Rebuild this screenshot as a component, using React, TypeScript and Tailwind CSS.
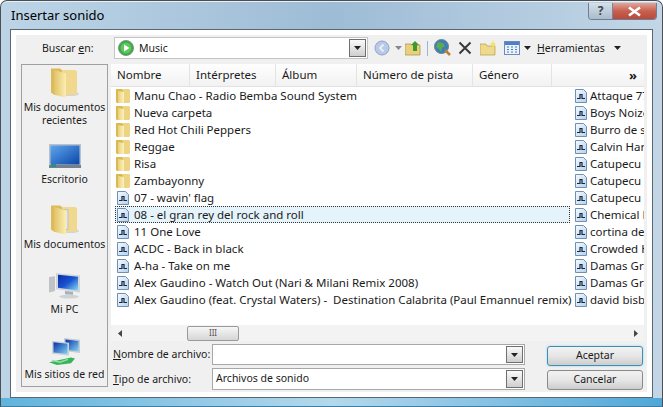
import React from "react";

const Folder = ({ className = "" }: { className?: string }) => (
  <svg width="16" height="16" viewBox="0 0 16 16" className={"shrink-0 " + className}>
    <defs>
      <linearGradient id="fa" x1="0" x2="1" y1="0" y2="0">
        <stop offset="0" stopColor="#e8cf7c" />
        <stop offset="1" stopColor="#fdf2bf" />
      </linearGradient>
    </defs>
    <path d="M1 1h6l1 1v13H2l-1-1z" fill="#d9b950" />
    <path d="M8 1h6l1 1v12l-1 1H8z" fill="#edd483" />
    <path d="M3 3l6 1v11H3z" fill="url(#fa)" />
  </svg>
);

const Audio = ({ className = "" }: { className?: string }) => (
  <svg width="16" height="16" viewBox="0 0 16 16" className={"shrink-0 " + className}>
    <defs>
      <linearGradient id="au" x1="0" x2="1" y1="0" y2="1">
        <stop offset="0" stopColor="#f6fbff" />
        <stop offset="1" stopColor="#b4d0ec" />
      </linearGradient>
    </defs>
    <path d="M2.500 1.500h8l3 3v10h-11z" fill="url(#au)" stroke="#6f8fb5" />
    <path d="M4 10.500h3v-4h2v4h3" fill="none" stroke="#12263f" strokeWidth="1.200" />
  </svg>
);

const Caret = ({ className = "" }: { className?: string }) => (
  <svg width="7" height="4" viewBox="0 0 7 4" className={"shrink-0 " + className}>
    <path d="M0 0h7L3.500 4z" fill="#222" />
  </svg>
);

const ComboArrow = () => (
  <div className="w-[17px] self-stretch m-px border border-[#6f6f6f] bg-gradient-to-b from-[#fafafa] to-[#cfcfcf] flex items-center justify-center">
    <Caret />
  </div>
);

const BigFolder = ({ docs = false }: { docs?: boolean }) => (
  <svg width="32" height="32" viewBox="0 0 32 44" preserveAspectRatio="none">
    <defs>
      <linearGradient id="bf" x1="0" x2="1" y1="0" y2="0">
        <stop offset="0" stopColor="#e2c268" />
        <stop offset="1" stopColor="#fbeeb0" />
      </linearGradient>
    </defs>
    <ellipse cx="22" cy="37" rx="9" ry="3" fill="#d4d4d4" />
    <path d="M3 2h9l2 2v34H6l-3-3z" fill="#dcbc58" />
    <path d="M14 4h13l2 2v30l-2 2H14z" fill="#f0d98e" />
    {docs && <path d="M12 8h8v27h-8z" fill="#e6e6e6" stroke="#bbb" />}
    <path d="M6 4l12 5v33L6 38z" fill="url(#bf)" />
  </svg>
);

const Desktop = () => (
  <svg width="32" height="24" viewBox="0 0 32 24">
    <defs>
      <linearGradient id="dk" x1="0" x2="1" y1="0" y2="1">
        <stop offset="0" stopColor="#5ea6ee" />
        <stop offset="1" stopColor="#0c46a8" />
      </linearGradient>
    </defs>
    <rect x="0" y="0" width="32" height="24" fill="#b8c2cc" />
    <rect x="1.500" y="1.500" width="29" height="19" fill="url(#dk)" />
    <rect x="0" y="21" width="32" height="3" fill="#76808a" />
    <rect x="2" y="20" width="5" height="3" fill="#2b8c8c" />
  </svg>
);

const Pc = () => (
  <svg width="32" height="26" viewBox="0 0 32 32" preserveAspectRatio="none">
    <defs>
      <linearGradient id="pc" x1="0" x2="1" y1="0" y2="1">
        <stop offset="0" stopColor="#0a2ea8" />
        <stop offset="0.500" stopColor="#1a52d0" />
        <stop offset="1" stopColor="#86dcf4" />
      </linearGradient>
    </defs>
    <path d="M0 5l6-1v18l-6 2z" fill="#bfc3c8" />
    <path d="M7 0l24 3v21L7 20z" fill="#cfd5da" />
    <path d="M9 2l20 2.500v17L9 18z" fill="url(#pc)" />
    <path d="M16 22l8 1v4l-8-1z" fill="#aab0b6" />
    <ellipse cx="20" cy="29" rx="10" ry="2.500" fill="#d0d3d6" />
  </svg>
);

const Net = () => (
  <svg width="32" height="28" viewBox="0 0 32 30" preserveAspectRatio="none">
    <defs>
      <linearGradient id="nt" x1="0" x2="1" y1="0" y2="1">
        <stop offset="0" stopColor="#0a2ea8" />
        <stop offset="1" stopColor="#7fd4f2" />
      </linearGradient>
    </defs>
    <path d="M15 0l16 2v14l-16-2z" fill="#c4ccd4" />
    <path d="M16.500 1.500l13 1.700v11l-13-1.700z" fill="url(#nt)" />
    <path d="M3 3l17 2v14L3 17z" fill="#ccd2d8" />
    <path d="M4.500 4.500l14 1.700v11l-14-1.700z" fill="url(#nt)" />
    <path d="M0 26l22-5 4 1-4 5-14 2z" fill="#35b45a" />
    <path d="M3 24l8 2 8-3" fill="none" stroke="#9adf9f" strokeWidth="1.500" />
  </svg>
);

const Place = ({
  icon,
  label,
  className,
  gap,
}: {
  icon: React.ReactNode;
  label: React.ReactNode;
  className: string;
  gap: string;
}) => (
  <div className={"flex flex-col items-center text-center leading-[13px] whitespace-nowrap " + className}>
    {icon}
    <span className={gap}>{label}</span>
  </div>
);

const left: [string, boolean][] = [
  ["Manu Chao - Radio Bemba Sound System", true],
  ["Nueva carpeta", true],
  ["Red Hot Chili Peppers", true],
  ["Reggae", true],
  ["Risa", true],
  ["Zambayonny", true],
  ["07 - wavin' flag", false],
  ["08 - el gran rey del rock and roll", false],
  ["11 One Love", false],
  ["ACDC - Back in black", false],
  ["A-ha - Take on me", false],
  ["Alex Gaudino - Watch Out (Nari & Milani Remix 2008)", false],
  ["Alex Gaudino (feat. Crystal Waters) -  Destination Calabrita (Paul Emannuel remix)", false],
];

const right = [
  "Attaque 77",
  "Boys Noize",
  "Burro de sl",
  "Calvin Harris",
  "Catupecu",
  "Catupecu",
  "Catupecu",
  "Chemical Brothers",
  "cortina de",
  "Crowded House",
  "Damas Gra",
  "Damas Gra",
  "david bisb",
];

const cols: [string, string][] = [
  ["Nombre", "w-[79px]"],
  ["Intérpretes", "w-[86px]"],
  ["Álbum", "w-[81px]"],
  ["Número de pista", "w-[116px]"],
  ["Género", "w-[79px]"],
];

export default function App() {
  return (
    <div
      className="w-[663px] h-[407px] bg-white overflow-hidden text-[#1a1a1a] text-[10.5px]"
      style={{ fontFamily: '"Noto Sans", "Open Sans", sans-serif' }}
    >
      <div className="w-full h-full flex flex-col rounded-t-[7px] border border-[#4a4f55] border-b-[#3f7ea3] bg-gradient-to-r from-[#bcd4e6] via-[#9ebcd6] to-[#c2d6e6] shadow-[inset_0_1px_0_#e8f0f6]">
        {/* title bar */}
        <div className="h-[28px] shrink-0 flex items-start justify-between pl-[10px] pr-[5px]">
          <span className="mt-[6px] text-[13px] leading-[16px] text-black">Insertar sonido</span>
          <div className="flex h-[17px] mt-[2px] rounded-b-[4px] border border-[#6d7f90] border-t-0 overflow-hidden">
            <div className="w-[24px] bg-gradient-to-b from-[#d4e0ea] to-[#a9bccd] flex items-center justify-center text-[12px] font-bold text-[#444] border-r border-[#7a8794]">
              ?
            </div>
            <div className="w-[43px] bg-gradient-to-b from-[#e0a49a] via-[#c8604f] to-[#b84a3c] flex items-center justify-center">
              <svg width="15" height="11" viewBox="0 0 15 11">
                <path d="M2 1.500l11 8M13 1.500l-11 8" stroke="#fff" strokeWidth="2.600" />
              </svg>
            </div>
          </div>
        </div>

        {/* client */}
        <div className="flex-1 mx-[9px] border border-[#5a6670] bg-white p-[5px] min-h-0">
          <div className="w-full h-full bg-[#f0f0f0] flex flex-col relative">
            {/* toolbar */}
            <div className="h-[29px] shrink-0 flex items-start pt-[2px] pl-[26px]">
              <span className="w-[72px] mt-[2px] leading-[18px]">
                Buscar <u>e</u>n:
              </span>
              <div className="w-[254px] h-[22px] flex items-stretch bg-white border border-[#c4c4c4]">
                <div className="flex-1 flex items-center pl-[3px] gap-[5px]">
                  <svg width="16" height="16" viewBox="0 0 16 16">
                    <circle cx="8" cy="8" r="7.500" fill="#3aa64a" stroke="#7a9a80" />
                    <circle cx="8" cy="8" r="5.500" fill="#5cc75a" />
                    <path d="M6 4.500l5.500 3.500L6 11.500z" fill="#fff" />
                  </svg>
                  <span className="leading-none">Music</span>
                </div>
                <ComboArrow />
              </div>
              <div className="flex items-center h-[22px] ml-[6px]">
                <svg width="16" height="16" viewBox="0 0 16 16">
                  <circle cx="8" cy="8" r="7" fill="#b9c8e6" stroke="#8ea3cc" />
                  <path d="M9.500 4.500L6 8l3.500 3.500" fill="none" stroke="#e8eef8" strokeWidth="2" />
                </svg>
                <Caret className="ml-[5px] opacity-50" />
                <svg width="16" height="16" viewBox="0 0 16 16" className="ml-[3px]">
                  <path d="M0 4h6l1 1h8v10H0z" fill="#e8d07c" stroke="#a8903f" strokeWidth="0.700" />
                  <path d="M10 1l4 4h-2v6H8V5H6z" fill="#3d9a2e" />
                </svg>
                <div className="w-px h-[15px] bg-[#9db8cc] ml-[6px]" />
                <svg width="18" height="18" viewBox="0 0 18 18" className="ml-[6px]">
                  <circle cx="7.500" cy="7.500" r="7" fill="#3c7fb5" stroke="#6a8296" />
                  <path d="M4 3l5 1 2 3-3 2-1 4-2-3-3-2z" fill="#5caa55" />
                  <path d="M11 11l5 5" stroke="#b8803a" strokeWidth="2.500" />
                </svg>
                <svg width="14" height="14" viewBox="0 0 14 14" className="ml-[6px]">
                  <path d="M1.500 1.500l11 11M12.500 1.500l-11 11" stroke="#3a3a3a" strokeWidth="2" />
                </svg>
                <svg width="17" height="16" viewBox="0 0 17 16" className="ml-[8px]">
                  <path d="M0 4h6l1 2h8v9H0z" fill="#eed98c" stroke="#b89c48" strokeWidth="0.700" />
                  <path d="M13 0l1 3 3 1-3 1-1 3-1-3-3-1 3-1z" fill="#f6e36a" />
                </svg>
                <svg width="16" height="14" viewBox="0 0 16 14" className="ml-[7px]">
                  <rect x="0.500" y="0.500" width="15" height="13" fill="#eaf2fb" stroke="#6a8cc0" />
                  <rect x="1" y="1" width="14" height="3" fill="#4f7fc4" />
                  <path d="M3 6h2M7 6h2M11 6h2M3 8.500h2M7 8.500h2M11 8.500h2M3 11h2M7 11h2M11 11h2" stroke="#5579b0" />
                </svg>
                <Caret className="ml-[4px]" />
                <span className="ml-[6px] leading-none">
                  <u>H</u>erramientas
                </span>
                <Caret className="ml-[9px]" />
              </div>
            </div>

            <div className="flex-1 flex min-h-0 pl-[5px] pr-[3px] pb-[5px]">
              {/* places bar */}
              <div className="w-[87px] shrink-0 border border-[#a0a0a0] flex flex-col items-center">
                <Place className="mt-[2px]" gap="mt-[2px]" icon={<BigFolder />} label={<>Mis documentos<br />recientes</>} />
                <Place className="mt-[17px]" gap="mt-[5px]" icon={<Desktop />} label="Escritorio" />
                <Place className="mt-[18px]" gap="mt-[2px]" icon={<BigFolder docs />} label="Mis documentos" />
                <Place className="mt-[22px]" gap="mt-[4px]" icon={<Pc />} label="Mi PC" />
                <Place className="mt-[22px]" gap="mt-[2px]" icon={<Net />} label="Mis sitios de red" />
              </div>

              <div className="flex-1 min-w-0 ml-[3px] flex flex-col">
                {/* list */}
                <div className="h-[277px] shrink-0 flex flex-col overflow-hidden">
                  <div className="h-[23px] shrink-0 flex items-center bg-gradient-to-b from-[#fefefe] to-[#f2f2f2] border-b border-[#e2e2e2] text-[11.5px]">
                    {cols.map(([t, w]) => (
                      <div key={t} className={"h-full flex items-center pl-[6px] border-r border-[#e4e4e4] " + w}>
                        {t}
                      </div>
                    ))}
                    <div className="flex-1 text-right pr-[7px] text-[13px] font-bold leading-none">»</div>
                  </div>
                  <div className="flex-1 flex bg-white min-h-0 text-[11.5px]">
                    <div className="w-[459px] shrink-0 pl-[4px]">
                      {left.map(([t, f], i) => (
                        <div
                          key={t}
                          className={
                            "h-[17px] flex items-center gap-[3px] whitespace-pre leading-none " +
                            (i === 7 ? "bg-[#e5f3fb] outline-1 outline-dotted outline-[#333] -outline-offset-1" : "")
                          }
                        >
                          {f ? <Folder /> : <Audio />}
                          <span>{t}</span>
                        </div>
                      ))}
                    </div>
                    <div className="flex-1 min-w-0 overflow-hidden pl-[3px]">
                      {right.map((t, i) => (
                        <div key={i} className="h-[17px] flex items-center gap-[1px] whitespace-pre leading-none">
                          <Audio />
                          <span>{t}</span>
                        </div>
                      ))}
                    </div>
                  </div>
                  <div className="h-[16px] shrink-0 bg-[#f3f3f3] flex items-center pl-[7px] pr-[6px] justify-between">
                    <svg width="4" height="7" viewBox="0 0 4 7"><path d="M4 0v7L0 3.500z" fill="#444" /></svg>
                    <div className="absolute left-[171px] h-[15px] w-[52px] border border-[#9a9a9a] rounded-[2px] bg-gradient-to-b from-[#f6f6f6] to-[#d6d6d6] flex items-center justify-center text-[8px] leading-none text-[#555]">
                      III
                    </div>
                    <svg width="4" height="7" viewBox="0 0 4 7"><path d="M0 0v7l4-3.500z" fill="#444" /></svg>
                  </div>
                </div>

                {/* bottom form */}
                <div className="flex-1 flex pl-[2px] pt-[3px]">
                  <div className="w-[99px] shrink-0 whitespace-nowrap">
                    <div className="h-[21px] flex items-center"><span><u>N</u>ombre de archivo:</span></div>
                    <div className="h-[24px] mt-[3px] flex items-center"><span><u>T</u>ipo de archivo:</span></div>
                  </div>
                  <div className="w-[313px] shrink-0 flex flex-col gap-[3px]">
                    <div className="h-[21px] flex bg-white border border-[#a8a8a8]">
                      <div className="flex-1" />
                      <ComboArrow />
                    </div>
                    <div className="h-[22px] flex bg-white border border-[#a8a8a8]">
                      <div className="flex-1 flex items-center pl-[3px]">Archivos de sonido</div>
                      <ComboArrow />
                    </div>
                  </div>
                  <div className="ml-[22px] flex flex-col w-[96px] gap-[4px] pt-[2px]">
                    <div className="h-[20px] rounded-[3px] border border-[#3c90b8] shadow-[0_0_2px_#7fd0f0] bg-gradient-to-b from-[#f2f2f2] via-[#e6e6e6] to-[#cdcdcd] flex items-center justify-center">
                      Aceptar
                    </div>
                    <div className="h-[20px] rounded-[3px] border border-[#8a8a8a] bg-gradient-to-b from-[#f2f2f2] via-[#e6e6e6] to-[#cdcdcd] flex items-center justify-center">
                      Cancelar
                    </div>
                  </div>
                </div>
              </div>
            </div>
          </div>
        </div>
        <div className="h-[8px] shrink-0 bg-gradient-to-r from-[#5fb4dc] via-[#b4d8ec] to-[#4ea8d8]" />
      </div>
    </div>
  );
}
